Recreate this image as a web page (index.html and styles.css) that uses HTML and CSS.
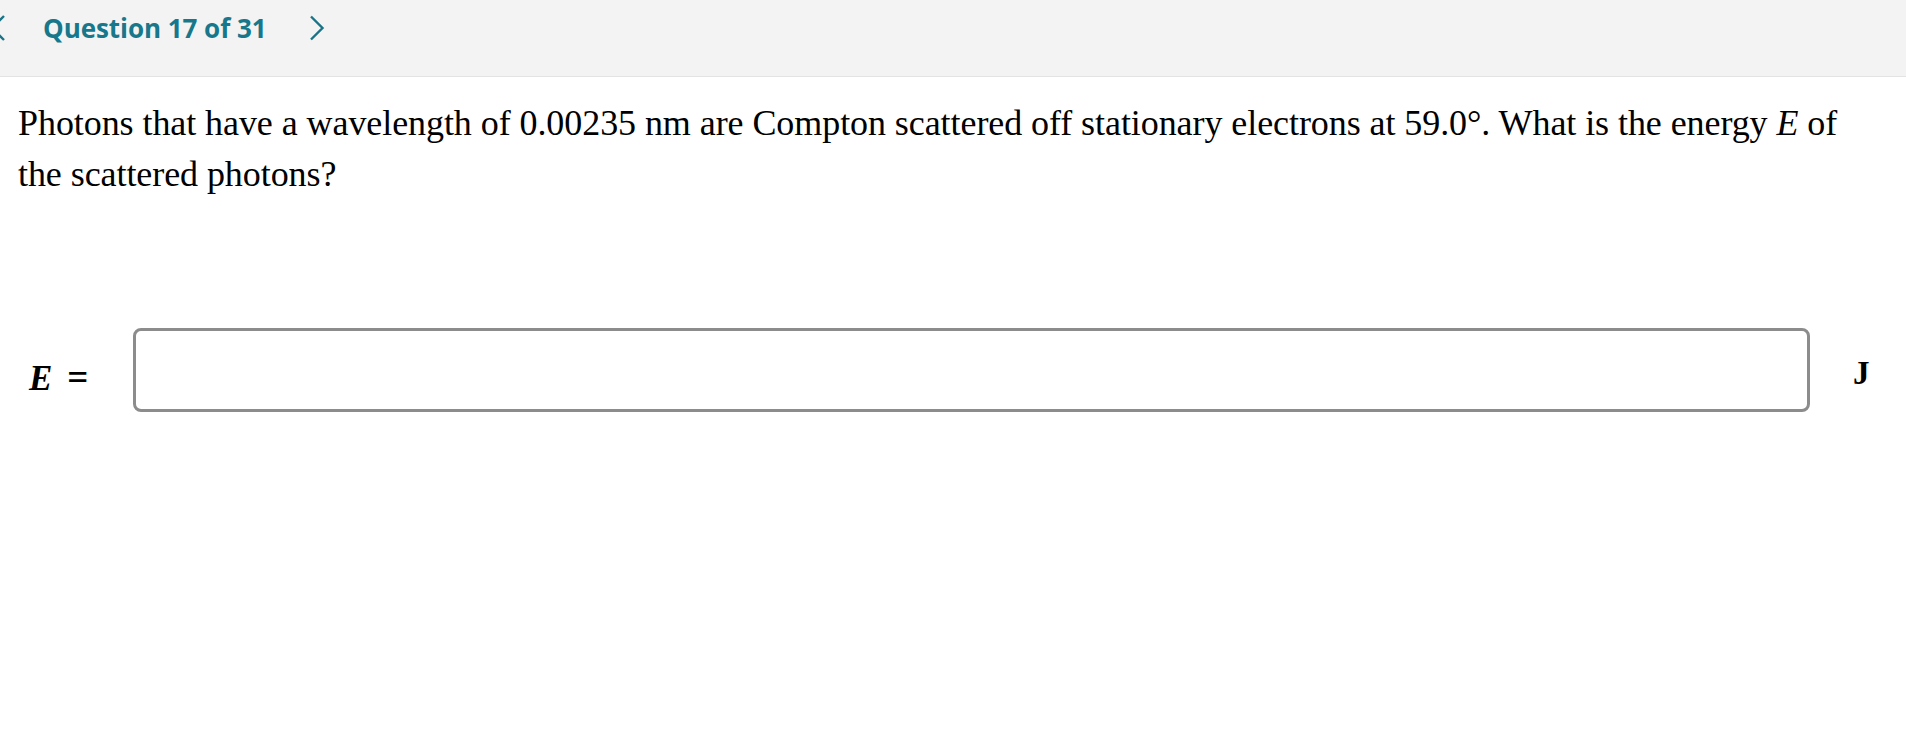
FILE: index.html
```html
<!DOCTYPE html>
<html>
<head>
<meta charset="utf-8">
<link rel="stylesheet" href="styles.css">
</head>
<body>
<header class="topbar">
  <span class="prev-edge"><svg width="6" height="26" viewBox="0 0 6 26"><polyline points="4,1 -8,13 4,25" fill="none" stroke="#1a7487" stroke-width="2.4"/></svg></span>
  <span class="qtitle">Question 17 of 31</span>
  <span class="next"><svg width="16" height="26" viewBox="0 0 16 26"><polyline points="2,1.5 13.5,13 2,24.5" fill="none" stroke="#1a7487" stroke-width="2.4"/></svg></span>
</header>
<main class="content">
  <p class="question">Photons that have a wavelength of 0.00235 nm are Compton scattered off stationary electrons at 59.0°. What is the energy <i>E</i> of the scattered photons?</p>
  <div class="answer-row">
    <span class="label"><i class="var">E</i><span class="eq">=</span></span>
    <div class="input-box"></div>
    <span class="unit">J</span>
  </div>
</main>
</body>
</html>
```
FILE: styles.css
```css
html, body {
  margin: 0;
  padding: 0;
  background: #ffffff;
}
.topbar {
  height: 77px;
  background: #f3f3f3;
  border-bottom: 1px solid #e3e3e3;
  display: flex;
  align-items: center;
  box-sizing: border-box;
  padding-bottom: 20px;
}
.prev-edge {
  display: flex;
  width: 43px;
}
.qtitle {
  font-family: "Open Sans", sans-serif;
  font-weight: 700;
  font-size: 26px;
  color: #17778b;
  letter-spacing: -0.05px;
}
.next {
  display: flex;
  margin-left: 42px;
}
.content {
  padding: 0 0 0 18px;
}
.question {
  font-family: "Liberation Serif", serif;
  font-size: 36px;
  letter-spacing: -0.07px;
  line-height: 51px;
  color: #000;
  margin: 21px 0 0 0;
  padding-right: 40px;
}
.answer-row {
  display: flex;
  align-items: center;
  margin-top: 128px;
}
.label {
  font-family: "Liberation Serif", serif;
  font-size: 35px;
  font-weight: bold;
  width: 115px;
  padding-left: 11px;
  padding-top: 14px;
  box-sizing: border-box;
  display: flex;
  align-items: baseline;
}
.eq {
  margin-left: 15px;
  font-size: 37px;
}
.input-box {
  width: 1677px;
  height: 84px;
  border: 3px solid #8c8c8c;
  border-radius: 8px;
  box-sizing: border-box;
}
.unit {
  font-family: "Liberation Serif", serif;
  font-weight: bold;
  font-size: 33px;
  padding-left: 43px;
  padding-top: 6px;
}
```
